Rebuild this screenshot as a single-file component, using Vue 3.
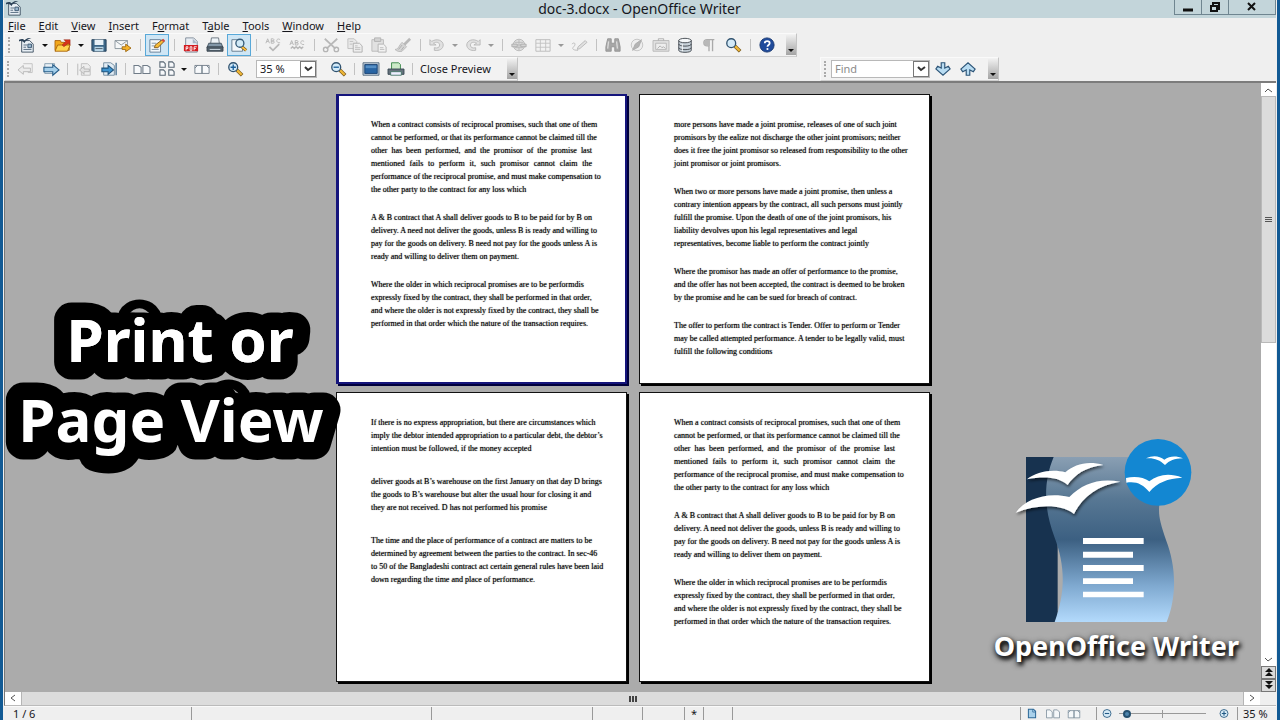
<script setup>
import { ref } from 'vue'

const menus = [
  ['', 'F', 'ile'], ['', 'E', 'dit'], ['', 'V', 'iew'], ['', 'I', 'nsert'], ['F', 'o', 'rmat'],
  ['T', 'a', 'ble'], ['', 'T', 'ools'], ['', 'W', 'indow'], ['', 'H', 'elp']
]

const lens = (sign) => `<path d="M12 10l6 6" stroke="#7a5a1c" stroke-width="4"/><path d="M12 10l5.500 5.500" stroke="#f0b838" stroke-width="2.500"/><circle cx="8" cy="7" r="5" fill="#d3eaf8" stroke="#30526f" stroke-width="1.500"/>${sign}`

const icons = {
  doc: '<path d="M4 4h9l4 4v9H4z" fill="#e8eff5" stroke="#3a4c5e"/><path d="M1 3c3-1 5-1 6 1 2-3 5-3 8-3-3 1-6 2-8 6C6 5 4 4 1 5z" fill="#2c4258"/><path d="M6 9h4M6 11.500h3M6 14h9" stroke="#4a6076"/><path d="M11 8h4v4h-4z" fill="#9bb8cf" stroke="#34506a"/>',
  open: '<path d="M1 4h6l1 2h9v9H1z" fill="#f3a81c" stroke="#a8620a"/><path d="M1 16l3-7h14l-3 7z" fill="#ffd34f" stroke="#a8620a"/><path d="M9 9l4-4-2-2h7v6l-2-2-5 4z" fill="#d8341c" stroke="#8c2010" stroke-width=".5"/>',
  save: '<path d="M2 3h16v13H3l-1-1z" fill="#3c6788" stroke="#1e3b54"/><path d="M5 3h10v6H5z" fill="#e8f1f7"/><path d="M5 11h10v5H5z" fill="#b7d5e6"/><path d="M6 13h8" stroke="#456"/>',
  mail: '<path d="M1 4h14v9H1z" fill="#f5f7f8" stroke="#85909a"/><path d="M1 4l7 5 7-5" fill="none" stroke="#85909a"/><path d="M9 11h4V8l6 4.500-6 4V14H9z" fill="#f5b32a" stroke="#9c6712"/>',
  edit: '<path d="M2 3h12v14H2z" fill="#f4f8fb" stroke="#5e7890"/><path d="M4 7h5M4 10h3M4 14h8" stroke="#7b8ea0"/><path d="M7 12l1-3 8-6 2 2-7 7z" fill="#f7bd38" stroke="#77501c"/><path d="M15 4l2-2 2 2-1 2z" fill="#d34a42"/>',
  pdf: '<path d="M4 1h9l4 4v12H4z" fill="#e8edf3" stroke="#7c8996"/><path d="M12 2l5 5h-5z" fill="#a8b7c6"/><path d="M2 9h16v7H2z" fill="#d31c20"/><path d="M4.500 15v-4h2v2h-2M9 11v4h2v-4zM13.500 15v-4h3M13.500 13h2" fill="none" stroke="#fff"/>',
  print: '<path d="M6 1h8l1 7H5z" fill="#eef4f8" stroke="#66717c"/><path d="M3 7h14l2 5H1z" fill="#8297a8" stroke="#3e4d59"/><path d="M1 11h18v5H1z" fill="#52606b" stroke="#36434e"/><path d="M4 14h12" stroke="#dae6ef"/>',
  preview: '<path d="M2 3h12v13H2z" fill="#f3f7fa" stroke="#5f7689"/><path d="M12 10l6 5" stroke="#785515" stroke-width="3.500"/><path d="M13 11l5 4" stroke="#ffc044" stroke-width="2"/><circle cx="11" cy="7" r="4.500" fill="#d2eaf7" stroke="#355b78" stroke-width="1.500"/>',
  spell: '<path d="M2 7l2-5 2 5M3 5h2M8 2v5h2c2 0 2-2.500 0-2.500H8h2C12 4 11 2 10 2zM18 3c-4-3-6 4 0 3.500" fill="none" stroke="#a5a5a5"/><path d="M6 11l4 4 7-7" fill="none" stroke="#aaa" stroke-width="2"/>',
  autospell: '<path d="M2 9l2-5 2 5M3 7h2M8 4v5h2c2 0 2-2.500 0-2.500H8h2C12 6 11 4 10 4zM18 5c-4-3-6 4 0 3.500" fill="none" stroke="#a5a5a5"/><path d="M3 13l2-2 2 2 2-2 2 2 2-2 2 2 2-2" fill="none" stroke="#aaa" stroke-width="1.500"/>',
  cut: '<path d="M3 2l12 11M17 2L5 13" stroke="#aaa" stroke-width="2"/><circle cx="4" cy="14" r="2.500" fill="none" stroke="#a5a5a5" stroke-width="1.500"/><circle cx="16" cy="14" r="2.500" fill="none" stroke="#a5a5a5" stroke-width="1.500"/>',
  copy: '<path d="M2 2h7l3 3v8H2z" fill="#e8e8e8" stroke="#b0b0b0"/><path d="M8 7h7l3 3v7H8z" fill="#eee" stroke="#999"/><path d="M4 5h4M4 8h3M10 10h3M10 12h6M10 14h6" stroke="#b0b0b0"/>',
  paste: '<path d="M2 3h13v13H2z" fill="#ddd" stroke="#aaa"/><path d="M5 1h7v4H5z" fill="#ccc" stroke="#a0a0a0"/><path d="M9 8h6l3 3v6H9z" fill="#f2f2f2" stroke="#a0a0a0"/><path d="M11 12h4M11 14h5" stroke="#b0b0b0"/>',
  brush: '<path d="M18 2l-7 7" stroke="#aaa" stroke-width="3"/><path d="M9 6l5 5-5 5c-3 1-6 0-8-2 4 0 4-4 8-8z" fill="#cfcfcf" stroke="#aaa"/><path d="M5 14l4-5M8 15l3-4" stroke="#999"/>',
  undo: '<path d="M2 3v6h7L6 7c3-2 7-1 7 2s-3 4-6 3v3c6 1 10-2 10-6 0-5-7-8-13-4z" fill="#ddd" stroke="#a8a8a8"/>',
  redo: '<path d="M18 3v6h-7l3-2c-3-2-7-1-7 2s3 4 6 3v3C7 16 3 13 3 9c0-5 7-8 13-4z" fill="#ddd" stroke="#a8a8a8"/>',
  globe: '<circle cx="10" cy="9" r="6.500" fill="#dcdcdc" stroke="#a8a8a8"/><path d="M10 3v12M4 9h12M5 6h10M5 12h10" stroke="#aaa"/><path d="M2 8h6v3H2zM12 8h6v3h-6z" fill="#ccc" stroke="#999"/>',
  table: '<path d="M2 3h16v13H2z" fill="#f3f3f3" stroke="#aaa"/><path d="M2 7h16M2 11.500h16M7 3v13M13 3v13" stroke="#b5b5b5"/>',
  draw: '<path d="M8 14l1-3 8-7 2 2-8 7z" fill="#ddd" stroke="#a8a8a8"/><path d="M2 8c3-3 5 0 2 3s1 4 5 4" fill="none" stroke="#aaa"/>',
  binoculars: '<path d="M4 2h4v5h4V2h4l2 9v5h-6v-5H8v5H2v-5z" fill="#959595" stroke="#7c7c7c"/><path d="M5 5l-1 8M14 5l1 8" stroke="#d6d6d6" stroke-width="1.500"/>',
  compass: '<circle cx="10" cy="9" r="6.500" fill="#eee" stroke="#b5b5b5"/><path d="M15 3L8 8l-3 7 7-4z" fill="#a5a5a5" stroke="#999"/>',
  gallery: '<path d="M1 4h18v12H1z" fill="#ddd" stroke="#a8a8a8"/><path d="M4 7h12v7H4z" fill="#eee" stroke="#a8a8a8"/><path d="M7 4V2h6v2M6 13l3-3 2 2 2-1 2 2" fill="none" stroke="#999"/>',
  database: '<path d="M3 4v11c0 3 14 3 14 0V4z" fill="#c8d2da" stroke="#3b4248"/><ellipse cx="10" cy="4" rx="7" ry="2.500" fill="#f5f8fa" stroke="#3b4248"/><path d="M3 8c0 3 14 3 14 0M3 12c0 3 14 3 14 0" fill="none" stroke="#3b4248"/><path d="M7 8v8" stroke="#fff"/>',
  pilcrow: '<path d="M16 3H8C3 3 3 10 8 10h2v6M14 3v13M10 3v7" fill="none" stroke="#999" stroke-width="1.500"/><path d="M8 3h3v7H8C3 10 3 3 8 3z" fill="#aaa"/>',
  zoom: lens(''),
  zoomIn: lens('<path d="M5 7h6M8 4v6" stroke="#1a5f9a" stroke-width="1.500"/>'),
  zoomOut: lens('<path d="M5 7h6" stroke="#1a5f9a" stroke-width="1.500"/>'),
  help: '<circle cx="10" cy="9" r="8" fill="#1f4b9b" stroke="#17366f"/><path d="M7.500 7c0-3 5.500-3 5.500 0 0 2-2.500 2-2.500 4" fill="none" stroke="#fff" stroke-width="2"/><circle cx="10.500" cy="13.500" r="1.200" fill="#fff"/>',
  prev: '<path d="M7 3h10v10h-5" fill="#f2f2f2" stroke="#b5b5b5"/><path d="M1 10l6-5v3h8v4H7v3z" fill="#eaeaea" stroke="#a8a8a8"/>',
  next: '<path d="M3 3h11v11H3z" fill="#e9f1f7" stroke="#7e97aa"/><path d="M19 10l-7-6v3H2v5h10v4z" fill="#a5cfea" stroke="#245b87" stroke-width="1.200"/>',
  first: '<path d="M7 3h7l3 3v10H7z" fill="#eee" stroke="#b0b0b0"/><path d="M3 3v13M5 10l5-4v3h6v3h-6v3z" fill="#ddd" stroke="#a5a5a5"/>',
  last: '<path d="M4 2h8l4 3v11H4z" fill="#e1ecf4" stroke="#6e879c"/><path d="M18 2v14M15 10L9 5v3H2v4h7v3z" fill="#3e94cf" stroke="#1d527c" stroke-width="1.200"/>',
  two: '<path d="M1 5h5l3 2v7H1zM11 5h5l3 2v7h-8z" fill="#f7f9fb" stroke="#707c88" stroke-width="1.200"/>',
  four: '<path d="M2 1h4l2 2v4H2zM12 1h4l2 2v4h-6zM2 10h4l2 2v4H2zM12 10h4l2 2v4h-6z" fill="#f7f9fb" stroke="#586673" stroke-width="1.200"/>',
  book: '<path d="M2 5h8v9H2zM10 5h8v9h-8z" fill="#f7f9fb" stroke="#707c88"/><path d="M2 8l3-3M15 5l3 3" stroke="#707c88"/>',
  full: '<path d="M1 2h18v14H1z" fill="#c5d2df" stroke="#50657a"/><path d="M3 4h14v10H3z" fill="#2864a3" stroke="#173f70"/><path d="M4 5h12v3H4z" fill="#568fc5"/>',
  printPage: '<path d="M5 2h8l2 2v6H5z" fill="#cceac8" stroke="#348444"/><path d="M1 9h18v6H1z" fill="#65717c" stroke="#364651"/><path d="M4 12h12v4H4z" fill="#eef" stroke="#476"/>',
  down: '<path d="M8 2h4v6l4-2 2 3-8 7-8-7 2-3 4 2z" fill="#b8dcf2" stroke="#2d5578" stroke-width="1.300"/>',
  up: '<path d="M8 16h4v-6l4 2 2-3-8-7-8 7 2 3 4-2z" fill="#b8dcf2" stroke="#2d5578" stroke-width="1.300"/>',
  onePage: '<path d="M5 3h7l3 3v9H5z" fill="#a9d0ea" stroke="#2b6797" stroke-width="1.400"/><path d="M11 3v4h4" fill="none" stroke="#2b6797"/>',
  twoPages: '<path d="M1 4h5l3 3v8H1zM11 4h5l3 3v8h-8z" fill="#f5f8fa" stroke="#708393"/>',
  bookPages: '<path d="M2 5h8v10H2zM10 5h8v10h-8z" fill="#f5f8fa" stroke="#708393"/><path d="M2 8l3-3M15 5l3 3" stroke="#708393"/>',
  minus: '<circle cx="10" cy="9" r="5.500" fill="#d6eaf6" stroke="#36658a" stroke-width="1.300"/><path d="M7 9h6" stroke="#225a86" stroke-width="1.500"/>',
  plus: '<circle cx="10" cy="9" r="5.500" fill="#d6eaf6" stroke="#36658a" stroke-width="1.300"/><path d="M7 9h6M10 6v6" stroke="#225a86" stroke-width="1.500"/>'
}

const b = (icon, label, opt = {}) => ({ icon, label, ...opt })
const dim = (icon, label) => ({ icon, label, off: true })
const sep = { sep: true }
const drop = (label, off) => ({ drop: true, label, off })

const standard = [
  b('doc', 'New'), drop('New options'), b('open', 'Open'), drop('Recent files'), b('save', 'Save'), b('mail', 'E-mail'), sep,
  b('edit', 'Edit file', { on: true }), sep, b('pdf', 'Export as PDF'), b('print', 'Print'), b('preview', 'Page preview', { on: true }), sep,
  dim('spell', 'Spelling'), dim('autospell', 'AutoSpellcheck'), sep,
  dim('cut', 'Cut'), dim('copy', 'Copy'), dim('paste', 'Paste'), dim('brush', 'Format paintbrush'), sep,
  dim('undo', 'Undo'), drop('Undo list', true), dim('redo', 'Redo'), drop('Redo list', true), sep,
  dim('globe', 'Hyperlink'), dim('table', 'Insert table'), drop('Table size', true), dim('draw', 'Draw functions'), sep,
  dim('binoculars', 'Find and replace'), dim('compass', 'Navigator'), dim('gallery', 'Gallery'), b('database', 'Data sources'),
  dim('pilcrow', 'Nonprinting characters'), b('zoom', 'Zoom'), sep, b('help', 'Help')
]
const previewA = [
  dim('prev', 'Previous page'), b('next', 'Next page'), sep, dim('first', 'First page'), b('last', 'Last page'), sep,
  b('two', 'Two pages'), b('four', 'Multiple pages'), drop('Page grid'), b('book', 'Book preview'), sep, b('zoomIn', 'Zoom in')
]
const previewB = [b('zoomOut', 'Zoom out'), sep, b('full', 'Full screen'), b('printPage', 'Print page view'), sep]

// A leading "=" marks a line that is set to the full measure.
const contract = [
  ['=When a contract consists of reciprocal promises, such that one of them', '=cannot be performed, or that its performance cannot be claimed till the', '=other has been performed, and the promisor of the promise last', '=mentioned fails to perform it, such promisor cannot claim the', '=performance of the reciprocal promise, and must make compensation to', 'the other party to the contract for any loss which'],
  ['=A & B contract that A shall deliver goods to B to be paid for by B on', '=delivery. A need not deliver the goods, unless B is ready and willing to', '=pay for the goods on delivery. B need not pay for the goods unless A is', 'ready and willing to deliver them on payment.'],
  ['Where the older in which reciprocal promises are to be performdis', 'expressly fixed by the contract, they shall be performed in that order,', 'and where the older is not expressly fixed by the contract, they shall be', 'performed in that order which the nature of the transaction requires.']
]
const pages = [
  { current: true, paras: contract },
  { paras: [
    ['more persons have made a joint promise, releases of one of such joint', 'promisors by the ealize not discharge the other joint promisors; neither', '=does it free the joint promisor so released from responsibility to the other', 'joint promisor or joint promisors.'],
    ['When two or more persons have made a joint promise, then unless a', 'contrary intention appears by the contract, all such persons must jointly', 'fulfill the promise. Upon the death of one of the joint promisors, his', 'liability devolves upon his legal representatives and legal', 'representatives, become liable to perform the contract jointly'],
    ['=Where the promisor has made an offer of performance to the promise,', '=and the offer has not been accepted, the contract is deemed to be broken', 'by the promise and he can be sued for breach of contract.'],
    ['The offer to perform the contract is Tender. Offer to perform or Tender', 'may be called attempted performance. A tender to be legally valid, must', 'fulfill the following conditions']
  ] },
  { loose: true, paras: [
    ['If there is no express appropriation, but there are circumstances which', 'imply the debtor intended appropriation to a particular debt, the debtor’s', 'intention must be followed, if the money accepted'],
    ['deliver goods at B’s warehouse on the first January on that day D brings', 'the goods to B’s warehouse but alter the usual hour for closing it and', 'they are not received. D has not performed his promise'],
    ['The time and the place of performance of a contract are matters to be', 'determined by agreement between the parties to the contract. In sec-46', 'to 50 of the Bangladeshi contract act certain general rules have been laid', 'down regarding the time and place of performance.']
  ] },
  { paras: contract }
]

const zoomLevel = ref('35 %')
const find = ref('')
const slider = ref(5)
</script>

<template>
  <div class="window">
    <header class="titlebar">
      <svg class="icon" viewBox="0 0 20 18" v-html="icons.doc"></svg>
      <h1>doc-3.docx - OpenOffice Writer</h1>
      <div class="winbtns">
        <button aria-label="Minimize"><svg width="12" height="10"><path d="M1 8h10" stroke="#111" stroke-width="3" /></svg></button>
        <button aria-label="Restore"><svg width="12" height="10" fill="none" stroke="#111" stroke-width="2"><path d="M2 4h6v5H2zM4 3V1h6v6H8" /></svg></button>
        <button class="close" aria-label="Close"><svg width="12" height="10"><path d="M2 1l7 7M9 1L2 8" stroke="#111" stroke-width="2" /></svg></button>
      </div>
    </header>

    <nav class="menubar">
      <button v-for="m in menus" :key="m.join('')">{{ m[0] }}<u>{{ m[1] }}</u>{{ m[2] }}</button>
    </nav>

    <div class="row">
      <div class="toolbar standard" role="toolbar" aria-label="Standard">
        <i class="grip"></i>
        <template v-for="(t, i) in standard" :key="i">
          <i v-if="t.sep" class="sep"></i>
          <button v-else-if="t.drop" class="drop" :class="{ off: t.off }" :disabled="t.off" :aria-label="t.label"></button>
          <button v-else class="tool" :class="{ on: t.on, off: t.off }" :disabled="t.off" :aria-label="t.label"><svg class="icon" viewBox="0 0 20 18" v-html="icons[t.icon]"></svg></button>
        </template>
        <button class="more" aria-label="Standard toolbar options"></button>
      </div>
    </div>

    <div class="row">
      <div class="toolbar preview" role="toolbar" aria-label="Page Preview">
        <i class="grip"></i>
        <template v-for="(t, i) in previewA" :key="i">
          <i v-if="t.sep" class="sep"></i>
          <button v-else-if="t.drop" class="drop" :aria-label="t.label"></button>
          <button v-else class="tool" :class="{ off: t.off }" :disabled="t.off" :aria-label="t.label"><svg class="icon" viewBox="0 0 20 18" v-html="icons[t.icon]"></svg></button>
        </template>
        <label class="combo zoombox">
          <select v-model="zoomLevel" aria-label="Zoom"><option>35 %</option><option>50 %</option><option>100 %</option></select>
          <span class="chev"><svg width="9" height="6"><path d="M1 1l3 3 4-3" /></svg></span>
        </label>
        <template v-for="(t, i) in previewB" :key="i">
          <i v-if="t.sep" class="sep"></i>
          <button v-else class="tool" :aria-label="t.label"><svg class="icon" viewBox="0 0 20 18" v-html="icons[t.icon]"></svg></button>
        </template>
        <button class="closepreview">Close Preview</button>
        <button class="more" aria-label="Preview toolbar options"></button>
      </div>
      <div class="toolbar finder" role="toolbar" aria-label="Find">
        <i class="grip"></i>
        <div class="combo findbox">
          <input v-model="find" type="text" placeholder="Find" aria-label="Find">
          <button class="chev" aria-label="Search history"><svg width="9" height="6"><path d="M1 1l3 3 4-3" /></svg></button>
        </div>
        <button class="tool" aria-label="Find next"><svg class="icon" viewBox="0 0 20 18" v-html="icons.down"></svg></button>
        <button class="tool" aria-label="Find previous"><svg class="icon" viewBox="0 0 20 18" v-html="icons.up"></svg></button>
        <button class="more" aria-label="Find toolbar options"></button>
      </div>
    </div>

    <div class="body">
      <main class="desk">
        <article v-for="(p, n) in pages" :key="n" class="page" :class="{ current: p.current, loose: p.loose }">
          <p v-for="(para, i) in p.paras" :key="i">
            <span v-for="(l, j) in para" :key="j" :class="{ full: l[0] === '=' }">{{ l.replace('=', '') }}</span>
          </p>
        </article>
      </main>
      <div class="vscroll">
        <button aria-label="Scroll up"><svg width="9" height="6"><path d="M1 5l3-3 4 3" /></svg></button>
        <div class="vthumb"><i></i></div>
        <div class="vtrack"></div>
        <button aria-label="Scroll down"><svg width="9" height="6"><path d="M1 1l3 3 4-3" /></svg></button>
        <button class="jump" aria-label="Previous page"><svg width="10" height="9"><path d="M5 0l4 4H1zM5 4l4 4H1z" /></svg></button>
        <button class="jump" aria-label="Next page"><svg width="10" height="9"><path d="M1 0h8L5 4zM1 4h8L5 8z" /></svg></button>
      </div>
    </div>

    <div class="hscroll">
      <button aria-label="Scroll left"><svg width="6" height="9"><path d="M5 1L1 4l4 3" /></svg></button>
      <div class="hthumb"><i></i></div>
      <button aria-label="Scroll right"><svg width="6" height="9"><path d="M1 1l4 3-4 3" /></svg></button>
      <i class="corner"></i>
    </div>

    <footer class="status">
      <span class="s1">1 / 6</span><span class="s2"></span><span class="s3"></span><span class="s4"></span><span class="s5"></span><span class="s6">*</span><span class="s7"></span>
      <span class="views">
        <button aria-label="Single page"><svg class="icon" viewBox="0 0 20 18" v-html="icons.onePage"></svg></button>
        <button aria-label="Side by side"><svg class="icon" viewBox="0 0 20 18" v-html="icons.twoPages"></svg></button>
        <button aria-label="Book mode"><svg class="icon" viewBox="0 0 20 18" v-html="icons.bookPages"></svg></button>
      </span>
      <span class="zoomer">
        <button aria-label="Zoom out"><svg class="icon" viewBox="0 0 20 18" v-html="icons.minus"></svg></button>
        <input v-model="slider" type="range" min="0" max="100" aria-label="Zoom factor">
        <button aria-label="Zoom in"><svg class="icon" viewBox="0 0 20 18" v-html="icons.plus"></svg></button>
      </span>
      <span class="pct">35 %</span>
    </footer>

    <svg class="caption" width="345" height="200" viewBox="0 0 345 200">
      <path d="M85 40H275V90H85zM40 120H305V165H40z" />
      <g text-anchor="middle" class="halo" fill="#fff">
        <text x="180" y="82">Print or</text><text x="171" y="162">Page View</text>
      </g>
      <g text-anchor="middle" fill="#fff">
        <text x="180" y="82">Print or</text>
      </g>
    </svg>

    <div class="brand">
      <svg width="184" height="190" viewBox="120 48 552 570">
        <defs>
          <linearGradient id="sheet" x1="0" y1="0" x2="0" y2="1">
            <stop offset="0" stop-color="#8a9fb3" /><stop offset=".25" stop-color="#587894" /><stop offset=".5" stop-color="#3c6082" /><stop offset=".78" stop-color="#7fa9d0" /><stop offset="1" stop-color="#b3dafc" />
          </linearGradient>
          <filter id="soft" x="-20%" y="-20%" width="140%" height="150%"><feDropShadow dx="3" dy="6" stdDeviation="4" flood-opacity=".6" /></filter>
        </defs>
        <path d="M165 111H260V606H165z" fill="#17324f" />
        <path d="M248 111C215 190 220 270 250 350C285 440 282 520 251 606H587C618 530 616 440 585 360C565 300 560 280 567 240L530 111z" fill="url(#sheet)" />
        <g fill="#fff" filter="url(#soft)">
          <path d="M168 178C195 155 245 146 283 157C310 133 350 121 397 135C345 140 310 165 290 195C265 171 220 167 168 178z" />
          <path d="M134 278C165 235 230 215 295 231C335 190 385 173 448 185C380 196 335 230 309 282C270 252 205 252 134 278z" />
        </g>
        <circle cx="561" cy="157" r="100" fill="#1387d2" />
        <g fill="#fff">
          <path d="M525 115C545 105 565 107 580 119C597 107 615 107 636 115C610 116 595 122 582 135C566 119 548 113 525 115z" />
          <path d="M465 174C490 168 518 171 535 184C562 163 595 158 634 173C590 175 558 188 535 216C515 192 495 183 466 188z" />
          <path d="M336 354h182v18H336zM336 395h150v18H336zM336 435h182v18H336zM336 475h150v17H336zM336 515h182v17H336z" />
        </g>
      </svg>
      <strong>OpenOffice Writer</strong>
    </div>
  </div>
</template>

<style>
html, body { margin: 0; overflow: hidden; }
</style>

<style scoped>
* { box-sizing: border-box; }
.window { position: relative; display: flex; flex-direction: column; height: 100vh; padding: 0 1px; background: #efefef; border: solid #125a94; border-width: 0 3px; font: 11px/14px "Noto Sans", "Open Sans", sans-serif; color: #16161c; }
button { font: inherit; color: inherit; border: 0; padding: 0; margin: 0; background: none; display: flex; align-items: center; justify-content: center; flex: none; }
.icon { width: 18px; height: 16px; display: block; fill: none; flex: none; }
.titlebar { display: flex; align-items: flex-start; height: 18px; background: #c3d5da; flex: none; }
.titlebar > .icon { margin-left: 1px; }
h1 { flex: 1; margin: 0; padding-left: 82px; font-size: 14px; line-height: 17px; font-weight: 400; text-align: center; }
.winbtns { display: flex; height: 15px; border: solid #6f8590; border-width: 0 1px 1px; }
.winbtns button { width: 27px; border-right: 1px solid #6f8590; }
.winbtns .close { width: 46px; border: 0; }
.menubar { display: flex; gap: 1px; height: 15px; flex: none; }
.menubar button { padding: 0 6px; height: 16px; display: block; line-height: 16px; }
.menubar button:first-child { padding-left: 4px; }
.menubar u { text-underline-offset: 1px; }
.row { display: flex; height: 24px; flex: none; }
.toolbar { display: flex; align-items: center; background: #f2f2f2; border: 1px solid #fafafa; border-right-color: #c4c4c4; border-bottom-color: #cfcfcf; }
.grip { width: 3px; height: 16px; margin: 0 4px 0 3px; border-left: 2px dotted #aaa; }
.preview .grip { margin: 0 3px 0 2px; }
.tool { width: 24px; height: 22px; }
.preview .tool { width: 25px; }
.tool.on { background: #cfe6f5; border: 1px solid #58a8d8; }
.tool.off .icon { opacity: .8; }
.sep { width: 10px; height: 12px; flex: none; background: linear-gradient(#c2c2c2, #c2c2c2) center / 1px 100% no-repeat; }
.preview .sep { width: 8px; }
.drop { width: 12px; height: 20px; }
.preview .drop { width: 10px; }
.drop::before, .more::before { content: ""; border: 3px solid transparent; border-top-color: #111; border-bottom: 0; }
.drop.off::before { border-top-color: #999; }
.more { width: 10px; height: 20px; align-items: flex-end; padding-bottom: 3px; background: linear-gradient(#efefef, #a4a4a4); }
.standard .more { margin-left: 7px; }
.closepreview { padding: 0 16px 0 4px; }
.combo { display: flex; height: 18px; background: #fff; border: 1px solid #b8b8b8; position: relative; }
.zoombox { width: 61px; margin: 0 8px 0 9px; }
.combo select, .combo input { appearance: none; border: 0; margin: 0; padding: 0 0 0 3px; width: 100%; min-width: 0; background: transparent; font: inherit; color: inherit; outline: 0; }
.combo input::placeholder { color: #8c8c8c; opacity: 1; }
.chev { display: flex; align-items: center; justify-content: center; flex: none; width: 16px; border: 1px solid #777; background: #fff; pointer-events: none; }
.chev svg { fill: none; stroke: #333; stroke-width: 2; }
.finder { margin-left: auto; margin-right: 277px; }
.findbox { width: 99px; }
.finder .tool { width: 25px; }
.finder .more { margin-left: 8px; }
.body { display: flex; flex: 1; min-height: 0; border-top: 2px solid #7c7c7c; }
.desk { flex: 1; display: grid; grid-template-columns: 291px 291px; grid-auto-rows: 290px; gap: 8px 12px; justify-content: center; padding-top: 11px; background: #ababab; border-left: 1px solid #777; }
.page { background: #fff; border: 1px solid #111; box-shadow: 2px 2px 0 #000; padding: 23px 34px 0; }
.page.current { border: 2px solid #15157c; border-left-width: 3px; padding: 22px 33px 0 32px; box-shadow: 2px 2px 0 #00003c; }
.page p { margin: 0 0 15px; font: 8px/13px "Liberation Serif", "Times New Roman", serif; color: #000; text-shadow: 0 0 1px #555; }
.page.loose p { margin-bottom: 20px; }
.page span { display: block; white-space: nowrap; }
.page .full { text-align: justify; text-align-last: justify; }
.vscroll { width: 15px; display: flex; flex-direction: column; background: #fff; }
.vscroll button { height: 13px; background: #fff; }
.vscroll path, .hscroll path { fill: none; stroke: #555; stroke-width: 1; }
.vthumb { flex: 246; background: #dcdcdc; border: 1px solid #b9b9b9; display: grid; place-items: center; }
.vthumb i { width: 7px; height: 6px; background: repeating-linear-gradient(#555 0 1px, transparent 1px 2px); }
.vtrack { flex: 311; }
.vscroll .jump { background: #dadada; border: 1px solid #777; }
.vscroll .jump path { fill: #111; stroke: none; }
.hscroll { display: flex; height: 14px; flex: none; background: #dcdcdc; border-bottom: 1px solid #bbb; border-left: 1px solid #777; }
.hscroll button { width: 16px; background: #fff; }
.hthumb { flex: 1; border: solid #b5b5b5; border-width: 0 1px; display: grid; place-items: center; }
.hthumb i { width: 8px; height: 6px; background: repeating-linear-gradient(90deg, #444 0 2px, transparent 2px 3px); }
.corner { width: 16px; background: #efefef; }
.status { display: flex; height: 14px; flex: none; border-top: 1px solid #fafafa; line-height: 13px; }
.status span { border-right: 1px solid #999; height: 13px; flex: none; }
.s1 { width: 188px; padding-left: 9px; }
.s2 { width: 240px; }
.s3 { width: 161px; }
.s4 { width: 50px; }
.s5 { width: 42px; }
.s6 { width: 19px; text-align: center; }
.s7 { width: 29px; }
.status .views { margin-left: auto; border-left: 1px solid #999; display: flex; align-items: center; gap: 3px; padding: 0 13px 0 2px; }
.views .icon, .zoomer .icon { width: 18px; height: 13px; }
.status .zoomer { display: flex; align-items: center; padding: 0 4px 0 1px; }
.views .icon, .zoomer .icon { height: 13px; }
.zoomer input { appearance: none; width: 87px; height: 10px; margin: 0 9px 0 3px; background: linear-gradient(#999, #999) center / 100% 1px no-repeat, linear-gradient(#999, #999) center / 1px 8px no-repeat; }
.zoomer input::-webkit-slider-thumb { appearance: none; width: 8px; height: 8px; border-radius: 50%; background: #4f86ae; border: 2px solid #26506f; }
.status .pct { width: 38px; padding-left: 5px; border: 0; }
.caption { position: absolute; left: 0; top: 280px; margin-left: -3px; overflow: visible; font: 700 60px "Noto Sans", "Open Sans", sans-serif; }
.halo { paint-order: stroke; stroke: #000; stroke-width: 35px; stroke-linejoin: round; }
.brand { position: absolute; right: 38px; top: 436px; display: flex; flex-direction: column; align-items: center; color: #fff; }
.brand svg { margin-left: -26px; }
.brand strong { font-size: 27px; line-height: 40px; text-shadow: 2px 3px 4px #000, 0 2px 6px #222; }
</style>
